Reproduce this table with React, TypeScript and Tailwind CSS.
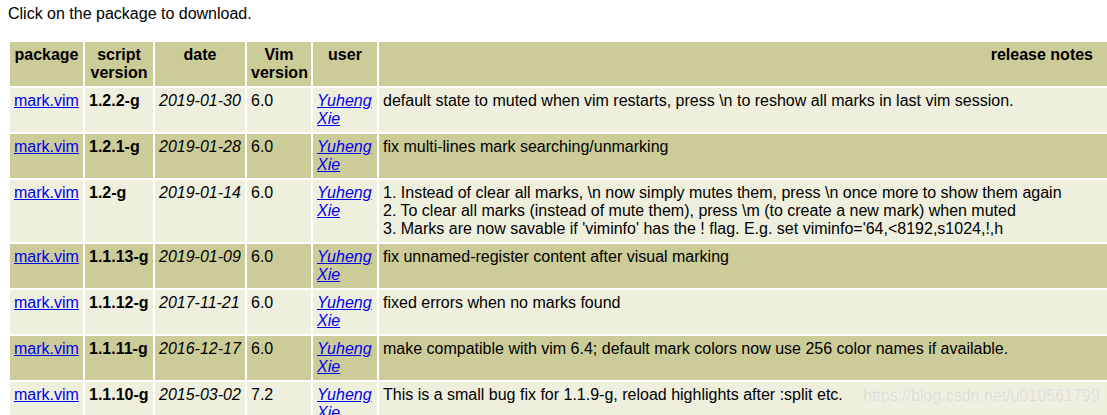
import React from 'react'

type Release = {
  version: string
  date: string
  vim: string
  notes: string[]
}

const releases: Release[] = [
  {
    version: '1.2.2-g',
    date: '2019-01-30',
    vim: '6.0',
    notes: ['default state to muted when vim restarts, press \\n to reshow all marks in last vim session.'],
  },
  { version: '1.2.1-g', date: '2019-01-28', vim: '6.0', notes: ['fix multi-lines mark searching/unmarking'] },
  {
    version: '1.2-g',
    date: '2019-01-14',
    vim: '6.0',
    notes: [
      '1. Instead of clear all marks, \\n now simply mutes them, press \\n once more to show them again',
      '2. To clear all marks (instead of mute them), press \\m (to create a new mark) when muted',
      "3. Marks are now savable if 'viminfo' has the ! flag. E.g. set viminfo='64,<8192,s1024,!,h",
    ],
  },
  { version: '1.1.13-g', date: '2019-01-09', vim: '6.0', notes: ['fix unnamed-register content after visual marking'] },
  { version: '1.1.12-g', date: '2017-11-21', vim: '6.0', notes: ['fixed errors when no marks found'] },
  {
    version: '1.1.11-g',
    date: '2016-12-17',
    vim: '6.0',
    notes: ['make compatible with vim 6.4; default mark colors now use 256 color names if available.'],
  },
  {
    version: '1.1.10-g',
    date: '2015-03-02',
    vim: '7.2',
    notes: ['This is a small bug fix for 1.1.9-g, reload highlights after :split etc.'],
  },
]

export default function App() {
  return (
    <div
      className="relative h-[415px] w-[1107px] overflow-hidden bg-white pl-[8px] pt-[5px] text-[16px] leading-[18px] text-black"
      style={{ fontFamily: '"Liberation Sans", Arial, sans-serif' }}
    >
      <p>Click on the package to download.</p>

      <table className="mt-[17px] w-[1112px] table-fixed border-separate border-spacing-[2px]">
        <thead>
          <tr className="bg-[#cccc99] align-top font-bold">
            <th className="w-[73px] p-[4px] text-center">package</th>
            <th className="w-[68px] p-[4px] text-center">script version</th>
            <th className="w-[90px] p-[4px] text-center">date</th>
            <th className="w-[64px] p-[4px] text-center">Vim version</th>
            <th className="w-[64px] p-[4px] text-center">user</th>
            <th className="p-[4px] pr-[25px] text-right">release notes</th>
          </tr>
        </thead>
        <tbody>
          {releases.map((r, i) => (
            <tr key={r.version} className={`align-top ${i % 2 === 0 ? 'bg-[#efefde]' : 'bg-[#cccc99]'}`}>
              <td className="p-[4px]">
                <a href="#" className="text-[#0000ee] underline">mark.vim</a>
              </td>
              <td className="p-[4px] font-bold">{r.version}</td>
              <td className="p-[4px] italic">{r.date}</td>
              <td className="p-[4px]">{r.vim}</td>
              <td className="p-[4px]">
                <a href="#" className="italic text-[#0000ee] underline">Yuheng Xie</a>
              </td>
              <td className="p-[4px]">
                {r.notes.map(n => (
                  <div key={n}>{n}</div>
                ))}
              </td>
            </tr>
          ))}
        </tbody>
      </table>

      {/* watermark */}
      <div className="absolute left-[863px] top-[387px] text-[16px] leading-[18px] text-[#dcdcd4] [text-shadow:0_0_1px_#ffffff]">
        https://blog.csdn.net/u010561799
      </div>
    </div>
  )
}
